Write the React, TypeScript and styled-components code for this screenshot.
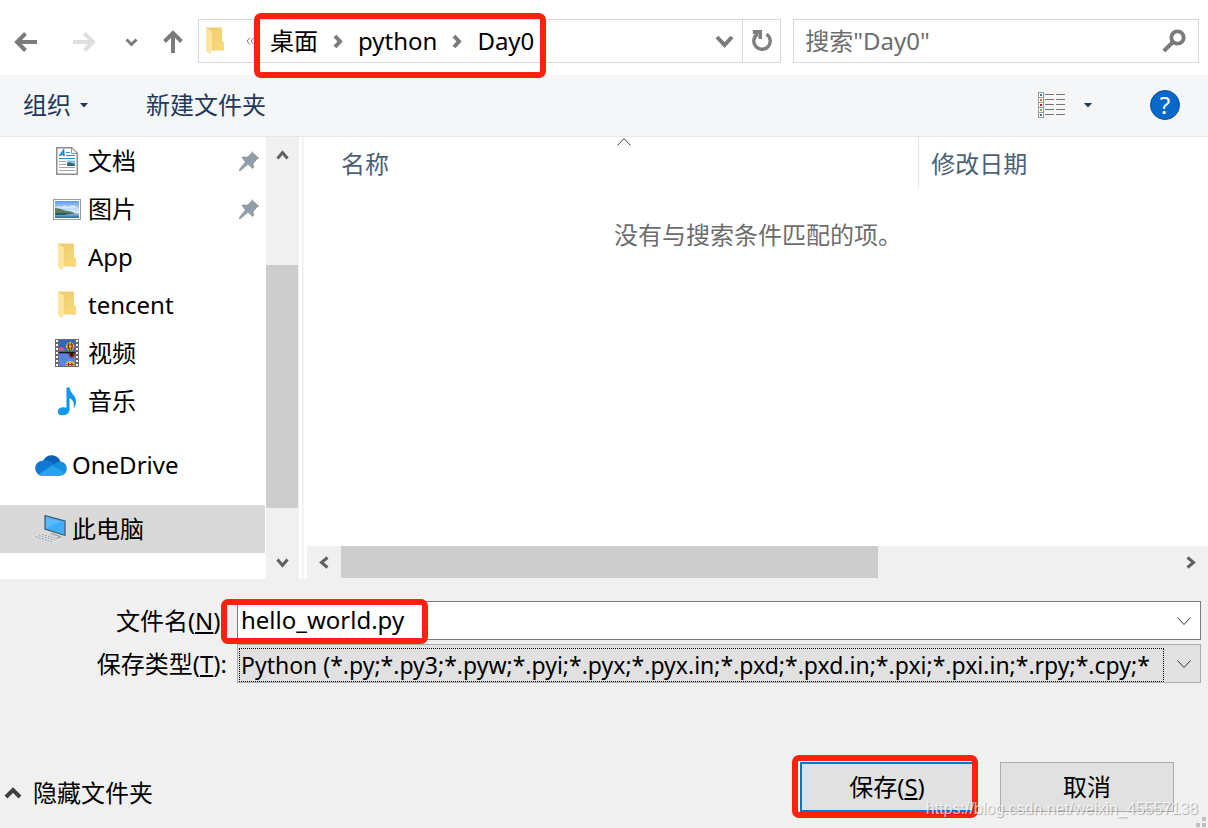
import React from "react";
import styled, { createGlobalStyle } from "styled-components";

const Global = createGlobalStyle`
  *, *::before, *::after { box-sizing: border-box; }
  body {
    margin: 0;
    background: #f0f0f0;
    color: #000;
    font: 24px/32px "Noto Sans", "Noto Sans CJK SC", sans-serif;
  }
  button, input, select { font: inherit; color: inherit; margin: 0; padding: 0; }
  svg { display: block; flex: none; }
`;

const Dialog = styled.div`
  display: flex;
  flex-direction: column;
  min-height: 100vh;
  overflow: hidden;
`;

const PlainButton = styled.button`
  display: flex;
  align-items: center;
  justify-content: center;
  border: 0;
  background: none;
  white-space: nowrap;
`;

/* Red frame drawn over the part of the dialog that it points out. */
const Marker = styled.span<{ $inset: string; $width?: number }>`
  position: absolute;
  inset: ${(p) => p.$inset};
  width: ${(p) => (p.$width ? `${p.$width}px` : "auto")};
  border: 6px solid #ff2010;
  border-radius: 7px;
  pointer-events: none;
  z-index: 2;
`;

/* ---------- navigation bar ---------- */

const NavBar = styled.nav`
  position: relative;
  z-index: 1;
  display: flex;
  align-items: center;
  height: 75px;
  padding: 7px 9px 0 14px;
  background: #fff;
`;

const NavButtons = styled.div`
  display: flex;
  align-items: center;
  flex: none;
  width: 184px;
  height: 44px;
  padding-top: 2px;
`;

const NavButton = styled(PlainButton)<{ $gap: number }>`
  margin-right: ${(p) => p.$gap}px;
`;

const AddressBox = styled.div`
  display: flex;
  flex: 29 1 0;
  min-width: 0;
  height: 44px;
  border: 1px solid #d9d9d9;
`;

const AddressIcon = styled.span`
  display: flex;
  align-items: center;
  justify-content: space-between;
  flex: none;
  width: 56px;
  padding-left: 6px;
`;

const Crumbs = styled.div`
  position: relative;
  display: flex;
  align-items: center;
  padding-left: 15px;
  padding-right: 12px;
`;

const Crumb = styled(PlainButton)`
  height: 32px;
`;

const CrumbArrow = styled.span`
  display: flex;
  justify-content: center;
  width: 40px;
`;

const AddressDrop = styled(PlainButton)`
  margin-left: auto;
  width: 36px;
`;

const RefreshButton = styled(PlainButton)`
  width: 38px;
  border-left: 1px solid #d9d9d9;
`;

const SearchBox = styled.label`
  display: flex;
  align-items: center;
  flex: 19 1 0;
  min-width: 0;
  height: 44px;
  margin-left: 12px;
  padding: 0 12px 0 11px;
  border: 1px solid #d9d9d9;
`;

const SearchInput = styled.input`
  flex: 1;
  min-width: 0;
  height: 32px;
  border: 0;
  outline: 0;
  background: none;
  &::placeholder { color: #6d6d6d; opacity: 1; }
`;

/* ---------- toolbar ---------- */

const Toolbar = styled.div`
  display: flex;
  align-items: center;
  height: 62px;
  padding: 0 28px 1px 23px;
  background: #f5f6f8;
  border-bottom: 1px solid #e6e7ea;
  color: #1e395b;
`;

const ToolButton = styled(PlainButton)<{ $gap?: number }>`
  gap: 9px;
  margin-right: ${(p) => p.$gap ?? 0}px;
`;

const ViewButton = styled(PlainButton)`
  gap: 18px;
  margin-left: auto;
  margin-right: 58px;
`;

const HelpButton = styled(PlainButton)`
  width: 30px;
  height: 30px;
  border: 1px solid #0a4f94;
  border-radius: 50%;
  background: #0569cb;
  color: #fff;
`;

/* ---------- body ---------- */

const Body = styled.div`
  display: flex;
  flex: 1;
  min-height: 442px;
  background: #fff;
`;

const Tree = styled.ul`
  width: 265px;
  flex: none;
  margin: 0;
  padding: 0;
  list-style: none;
`;

const TreeRow = styled.li<{ $root?: boolean; $selected?: boolean }>`
  display: flex;
  align-items: center;
  height: 48px;
  margin-top: ${(p) => (p.$root ? 16 : 0)}px;
  padding: 0 5px 0 ${(p) => (p.$root ? 34 : 50)}px;
  background: ${(p) => (p.$selected ? "#d9d9d9" : "none")};
`;

const TreeIcon = styled.span`
  display: flex;
  justify-content: center;
  width: 33px;
  margin-right: 5px;
`;

const TreeLink = styled.a`
  flex: 1;
  color: inherit;
  text-decoration: none;
`;

const VScroll = styled.div`
  display: flex;
  flex-direction: column;
  flex: none;
  width: 33px;
  margin-left: 1px;
  background: #f0f0f0;
`;

const VArrow = styled(PlainButton)`
  height: 34px;
  padding-top: 2px;
`;

const Divider = styled.div`
  flex: none;
  width: 2px;
  margin: 0 0 0 3px;
  background: #f3f3f3;
`;

const ScrollPart = styled.div<{ $grow: number; $thumb?: boolean }>`
  flex: ${(p) => p.$grow} 1 0;
  background: ${(p) => (p.$thumb ? "#cdcdcd" : "none")};
`;

const VTrack = styled.div`
  display: flex;
  flex-direction: column;
  flex: 1;
  padding-right: 1px;
`;

const Files = styled.main`
  display: flex;
  flex-direction: column;
  flex: 1;
  min-width: 0;
`;

const FileTable = styled.table`
  width: 100%;
  table-layout: fixed;
  border-collapse: collapse;
  color: #6d6d6d;
`;

const HeadCell = styled.th<{ $name?: boolean }>`
  position: relative;
  height: 51px;
  width: ${(p) => (p.$name ? "68%" : "auto")};
  padding: 2px 0 0 ${(p) => (p.$name ? 37 : 12)}px;
  border-right: ${(p) => (p.$name ? "1px solid #e5e5e5" : "0")};
  color: #4c607a;
  font-weight: 400;
  text-align: left;
`;

const SortMark = styled.span`
  position: absolute;
  top: 0;
  left: 0;
  right: 0;
  display: flex;
  justify-content: center;
  padding-left: 25px;
`;

const EmptyCell = styled.td`
  padding: 31px 0 0 4px;
  text-align: center;
`;

const HScroll = styled.div`
  display: flex;
  height: 33px;
  margin-top: auto;
  margin-left: 3px;
  padding-bottom: 1px;
  background: #f0f0f0;
`;

const HArrow = styled(PlainButton)`
  width: 34px;
`;

/* ---------- footer ---------- */

const Footer = styled.form`
  position: relative;
  padding: 22px 7px 0 0;
  background: #f0f0f0;
`;

const Fields = styled.div`
  display: grid;
  grid-template-columns: 227px minmax(0, 1fr);
  grid-auto-rows: 39px;
  gap: 4px 10px;
  align-items: center;
`;

const FieldLabel = styled.label`
  text-align: right;
  white-space: nowrap;
`;

const Field = styled.div<{ $filled?: boolean }>`
  position: relative;
  display: flex;
  height: 39px;
  padding: ${(p) => (p.$filled ? 3 : 2)}px 0 1px 1px;
  border: 1px solid ${(p) => (p.$filled ? "#adadad" : "#7a7a7a")};
  background: ${(p) => (p.$filled ? "#e1e1e1" : "#fff")};
`;

const NameInput = styled.input`
  flex: 1;
  min-width: 0;
  height: 32px;
  padding: 0 2px;
  border: 0;
  outline: 0;
  background: none;
`;

const TypeSelect = styled.select`
  flex: 1;
  min-width: 0;
  height: 34px;
  padding: 0 0 1px 1px;
  border: 1px dotted #000;
  border-radius: 0;
  outline: 0;
  background: none;
  appearance: none;
  font-size: 23px;
  text-overflow: clip;
`;

const FieldDrop = styled.span`
  display: flex;
  align-items: center;
  justify-content: center;
  flex: none;
  width: 36px;
  padding-left: 4px;
  pointer-events: none;
`;

const Actions = styled.div`
  display: flex;
  align-items: center;
  margin-top: 79px;
  padding: 0 27px 16px 4px;
`;

const HideButton = styled(PlainButton)`
  gap: 11px;
  margin-right: auto;
  padding-top: 11px;
`;

const ActionSlot = styled.div`
  position: relative;
  margin-left: 26px;
`;

const ActionButton = styled(PlainButton)<{ $primary?: boolean }>`
  width: 174px;
  height: 50px;
  background: #e1e1e1;
  border: ${(p) => (p.$primary ? "2px solid #0078d7" : "1px solid #adadad")};
`;

const Watermark = styled.span`
  position: absolute;
  right: 10px;
  bottom: 9px;
  z-index: 3;
  font: 16px/20px "Liberation Sans", sans-serif;
  color: rgba(255, 255, 255, 0.75);
  text-shadow: 1px 1px 1px rgba(0, 0, 0, 0.28);
  pointer-events: none;
`;

const Grip = styled.svg`
  position: absolute;
  right: 2px;
  bottom: 1px;
`;

/* ---------- icons ---------- */

type ChevronProps = { dir: "up" | "down" | "left" | "right"; w: number; h: number; stroke: number; color: string };

const Chevron = ({ dir, w, h, stroke, color }: ChevronProps) => {
  const s = stroke / 2;
  const pts = {
    up: `${s},${h - s} ${w / 2},${s + 1} ${w - s},${h - s}`,
    down: `${s},${s} ${w / 2},${h - s - 1} ${w - s},${s}`,
    left: `${w - s},${s} ${s + 1},${h / 2} ${w - s},${h - s}`,
    right: `${s},${s} ${w - s - 1},${h / 2} ${s},${h - s}`,
  }[dir];
  return (
    <svg width={w} height={h} aria-hidden="true">
      <polyline points={pts} fill="none" stroke={color} strokeWidth={stroke} />
    </svg>
  );
};

const Arrow = ({ kind }: { kind: "back" | "forward" | "up" }) => {
  const turn = { back: 0, forward: 180, up: 90 }[kind];
  return (
    <svg width="24" height="24" viewBox="0 0 24 24" aria-hidden="true">
      <g transform={`rotate(${turn} 12 12)`} fill="none" stroke={kind === "forward" ? "#dfdfdf" : "#7b7b7b"} strokeWidth="4">
        <path d="M2.5 12H23M11.5 3.5L3 12l8.500 8.500" />
      </g>
    </svg>
  );
};

const Caret = () => (
  <svg width="8" height="5" aria-hidden="true">
    <path d="M0 0h8L4 4.500z" fill="#1e395b" />
  </svg>
);

const Folder = () => (
  <svg width="20" height="28" viewBox="0 0 20 28" aria-hidden="true">
    <defs>
      <linearGradient id="fold" x1="0" y1="0" x2="1" y2="1">
        <stop offset="0" stopColor="#eccb6c" />
        <stop offset="1" stopColor="#fbdb7f" />
      </linearGradient>
    </defs>
    <path d="M12 24l8-.8-2-1.500z" fill="#e4e4e4" />
    <path d="M1 .5h16v13l2 2v8H3z" fill="url(#fold)" />
    <path d="M1 .5l6 4v19H6v4L1 24z" fill="#ffe69c" />
  </svg>
);

const Refresh = () => (
  <svg width="20" height="22" viewBox="0 0 20 22" aria-hidden="true">
    <path d="M14.500 4.200A8.200 8.200 0 1 1 5.800 4" fill="none" stroke="#7f7f7f" strokeWidth="3.400" />
    <path d="M.8 0H10v9H6.500V4H.8z" fill="#7f7f7f" />
  </svg>
);

const Magnifier = () => (
  <svg width="24" height="24" viewBox="0 0 24 24" aria-hidden="true">
    <circle cx="15.500" cy="8.500" r="6.200" fill="none" stroke="#7a7a7a" strokeWidth="3.800" />
    <path d="M11 13L1.800 22" stroke="#7a7a7a" strokeWidth="4" />
  </svg>
);

const DetailsView = () => (
  <svg width="28" height="27" viewBox="0 0 28 27" aria-hidden="true">
    {["#2f7f96", "#a8743c", "#c01818", "#7fb04a", "#2f7f96"].map((c, i) => (
      <g key={i}>
        <rect x="0.500" y={0.5 + i * 5} width="5" height="5" fill="#fff" stroke="#9a9a9a" />
        <rect x="2" y={2 + i * 5} width="2" height="2" fill={c} />
        <path d={`M7 ${2.5 + i * 5}h9M18 ${2.5 + i * 5}h9`} stroke="#777" />
      </g>
    ))}
  </svg>
);

const Pin = () => (
  <svg width="21" height="20" viewBox="0 0 21 20" aria-hidden="true">
    <path d="M12.500 0L20.500 7.500l-2 .5-4 4.500.5 4-1.500 1.500-4.500-4.500L1.500 20 0 19.800v-1.300L6 11 2.500 6.500 4 5.500l4.500.3 4-4z" fill="#929ea6" />
  </svg>
);

const DocIcon = () => (
  <svg width="22" height="28" viewBox="0 0 22 28" aria-hidden="true">
    <path d="M.75.75h15l5.500 5.500v21H.75z" fill="#fff" stroke="#8d8d8d" strokeWidth="1.500" />
    <path d="M15.500 1v5.500H21" fill="#eee" stroke="#9b9b9b" />
    <path d="M3.500 9L7.500 3.500 8 9M5 7.500h3" fill="none" stroke="#1c86c9" strokeWidth="1.600" />
    <path d="M10 5.500h4M10 8.500h9M3 11.500h16" stroke="#2f8fcd" strokeWidth="1.200" />
    <path d="M3 14.500h7M3 17.500h7M3 20.500h16M3 23.500h16" stroke="#a5a5a5" strokeWidth="1.200" />
    <rect x="11" y="13.500" width="8" height="5.500" fill="#8cc0ec" />
    <path d="M11 16l3-.8 5 2v1.800h-8z" fill="#326b7c" />
  </svg>
);

const PictureIcon = () => (
  <svg width="28" height="21" viewBox="0 0 28 21" aria-hidden="true">
    <defs>
      <linearGradient id="sky" x1="0" y1="0" x2="0" y2="1">
        <stop offset="0" stopColor="#5d9ced" />
        <stop offset="1" stopColor="#e5f2fc" />
      </linearGradient>
      <linearGradient id="lake" x1="0" y1="0" x2="0" y2="1">
        <stop offset="0" stopColor="#a5cde3" />
        <stop offset="1" stopColor="#23659e" />
      </linearGradient>
    </defs>
    <rect x=".5" y=".5" width="27" height="20" fill="#fff" stroke="#9b9b9b" />
    <rect x="2" y="2" width="24" height="12" fill="url(#sky)" />
    <path d="M3 8q3-2 5 0 4-3 7 0 3-3 9-.5v2H4z" fill="#d5e8fb" />
    <rect x="2" y="14" width="24" height="5" fill="url(#lake)" />
    <path d="M2 9q5 0 10 2.500 6 .5 11 3l-9 .5H2z" fill="#54805f" />
    <path d="M2 14h19l-9 2H2z" fill="#2f5c60" />
  </svg>
);

const VideoIcon = () => (
  <svg width="24" height="28" viewBox="0 0 24 28" aria-hidden="true">
    <rect width="24" height="28" fill="#6b6b6b" />
    {[1, 5, 9, 13, 17, 21, 25].map((y) => (
      <path key={y} d={`M1 ${y}h2v2H1zM21 ${y}h2v2h-2z`} fill="#fff" />
    ))}
    <rect x="4" y="1" width="16" height="26" fill="#3465c0" />
    <path d="M4 15h16v12H4z" fill="#5a86de" />
    <path d="M4 9.500q3-3 5 .5l3 1.500h8V13H4z" fill="#df5590" />
    <path d="M4 12l8-1 8 1v1.500H4z" fill="#1d7f83" />
    <path d="M3.500 13.500h17" stroke="#161616" />
    <path d="M11 7.500a4.200 4.200 0 0 1 8.400 0q0 2-3 4.500h-2.200q-3.200-2.500-3.200-4.500z" fill="#f0c72a" />
    <path d="M12 6h6.500M12 9h6" stroke="#a23a1a" />
    <path d="M14 4q-2 4 .8 8M16.500 4q2 4-.8 8" fill="none" stroke="#4d2d12" />
    <path d="M13 14h7v2q-1 2-2.500 3h-1.500q-2.500-2-3-5z" fill="#9d2a25" />
    <path d="M15 14h3v3h-3z" fill="#261a1a" />
    <path d="M11 27q-1-5 4.200-5t4.300 5z" fill="#f0c72a" />
    <path d="M13.500 27v-3.500M16.800 27v-3.500" stroke="#4d2d12" />
    <path d="M11.500 25.500h7.500" stroke="#a23a1a" />
  </svg>
);

const MusicIcon = () => (
  <svg width="20" height="29" viewBox="0 0 20 29" aria-hidden="true">
    <path d="M9.500.5h3q.5 4 3.500 7 3.500 3.500 3 8-.3 3.500-2.500 6 1-5.500-1-8-1.500-2-3-2.500v12q-.5 5-6.500 5.300Q.8 28.300.8 24.800.8 20.500 6.500 20.300q2 0 3 .5z" fill="#0b98f0" />
  </svg>
);

const CloudIcon = () => (
  <svg width="32" height="21" viewBox="0 0 32 21" aria-hidden="true">
    <path d="M8 6Q11 0 17 .3q6 .3 8.500 6.200L19 12z" fill="#0a62b8" />
    <path d="M8 5.500q5-1 10 3l5 3L5 20.500Q0 18 .2 12.500.8 6.500 8 5.500z" fill="#0f78d4" />
    <path d="M18 10q4-4 8-3.500 6 1.500 5.800 7.500-.3 4-3.800 6L15 12z" fill="#1590df" />
    <path d="M3.500 19.500L17 10.500l13 7.500q-2 3-6 3H7q-2 0-3.500-1.500z" fill="#28a4ea" />
  </svg>
);

const ComputerIcon = () => (
  <svg width="32" height="28" viewBox="0 0 32 28" aria-hidden="true">
    <path d="M10 .7L30 6v14.500L10 14z" fill="#3fadf8" stroke="#43596b" strokeWidth="1.200" />
    <path d="M11 2l15 4.500L11 13z" fill="#62bdfb" opacity=".8" />
    <path d="M16 18.500l10 3.200-4 1.300" fill="none" stroke="#8c98a0" />
    <path d="M0 21.500l7-2.500 18 5-7 3.500z" fill="#e4e7e9" />
    <path d="M1 21.500l17 5.500M4 20.500l17 5M7 19.500l16 4.500" stroke="#8b959c" strokeWidth=".9" strokeDasharray="2 1" />
  </svg>
);

const tree = [
  { text: "文档", icon: <DocIcon />, pinned: true },
  { text: "图片", icon: <PictureIcon />, pinned: true },
  { text: "App", icon: <Folder /> },
  { text: "tencent", icon: <Folder /> },
  { text: "视频", icon: <VideoIcon /> },
  { text: "音乐", icon: <MusicIcon /> },
  { text: "OneDrive", icon: <CloudIcon />, root: true },
  { text: "此电脑", icon: <ComputerIcon />, root: true, selected: true },
];

const scrollInk = "#606060";

export default function App() {
  return (
    <Dialog>
      <Global />
      <NavBar aria-label="导航">
        <NavButtons>
          <NavButton type="button" aria-label="后退" $gap={34}><Arrow kind="back" /></NavButton>
          <NavButton type="button" aria-label="前进" $gap={29}><Arrow kind="forward" /></NavButton>
          <NavButton type="button" aria-label="最近" $gap={23}>
            <Chevron dir="down" w={13} h={9} stroke={3} color="#7b7b7b" />
          </NavButton>
          <NavButton type="button" aria-label="向上" $gap={0}><Arrow kind="up" /></NavButton>
        </NavButtons>
        <AddressBox>
          <AddressIcon>
            <Folder />
            <svg width="9" height="8" aria-hidden="true">
              <path d="M4 .5L1 4l3 3.500M8 .5L5 4l3 3.500" fill="none" stroke="#7b7b7b" />
            </svg>
          </AddressIcon>
          <Crumbs>
            <Crumb type="button">桌面</Crumb>
            <CrumbArrow><Chevron dir="right" w={10} h={15} stroke={4} color="#7b7b7b" /></CrumbArrow>
            <Crumb type="button">python</Crumb>
            <CrumbArrow><Chevron dir="right" w={10} h={15} stroke={4} color="#7b7b7b" /></CrumbArrow>
            <Crumb type="button">Day0</Crumb>
            <Marker $inset="-7px 0 -16px -1px" />
          </Crumbs>
          <AddressDrop type="button" aria-label="以前的位置">
            <Chevron dir="down" w={19} h={13} stroke={4} color="#7b7b7b" />
          </AddressDrop>
          <RefreshButton type="button" aria-label="刷新"><Refresh /></RefreshButton>
        </AddressBox>
        <SearchBox>
          <SearchInput type="search" aria-label="搜索" placeholder={'搜索"Day0"'} />
          <Magnifier />
        </SearchBox>
      </NavBar>

      <Toolbar>
        <ToolButton type="button" $gap={58}>组织<Caret /></ToolButton>
        <ToolButton type="button">新建文件夹</ToolButton>
        <ViewButton type="button" aria-label="更改视图"><DetailsView /><Caret /></ViewButton>
        <HelpButton type="button">?</HelpButton>
      </Toolbar>

      <Body>
        <Tree>
          {tree.map((n) => (
            <TreeRow key={n.text} $root={n.root} $selected={n.selected}>
              <TreeIcon>{n.icon}</TreeIcon>
              <TreeLink href="#">{n.text}</TreeLink>
              {n.pinned && <Pin />}
            </TreeRow>
          ))}
        </Tree>
        <VScroll>
          <VArrow type="button" aria-label="向上滚动"><Chevron dir="up" w={13} h={10} stroke={3} color={scrollInk} /></VArrow>
          <VTrack>
            <ScrollPart $grow={94} />
            <ScrollPart $grow={243} $thumb />
            <ScrollPart $grow={37} />
          </VTrack>
          <VArrow type="button" aria-label="向下滚动"><Chevron dir="down" w={13} h={10} stroke={3} color={scrollInk} /></VArrow>
        </VScroll>
        <Divider />
        <Files>
          <FileTable>
            <thead>
              <tr>
                <HeadCell scope="col" $name>
                  <SortMark><Chevron dir="up" w={14} h={9} stroke={1} color="#444" /></SortMark>
                  名称
                </HeadCell>
                <HeadCell scope="col">修改日期</HeadCell>
              </tr>
            </thead>
            <tbody>
              <tr><EmptyCell colSpan={2}>没有与搜索条件匹配的项。</EmptyCell></tr>
            </tbody>
          </FileTable>
          <HScroll>
            <HArrow type="button" aria-label="向左滚动"><Chevron dir="left" w={10} h={13} stroke={3} color={scrollInk} /></HArrow>
            <ScrollPart $grow={538} $thumb />
            <ScrollPart $grow={297} />
            <HArrow type="button" aria-label="向右滚动"><Chevron dir="right" w={10} h={13} stroke={3} color={scrollInk} /></HArrow>
          </HScroll>
        </Files>
      </Body>

      <Footer onSubmit={(e) => e.preventDefault()}>
        <Fields>
          <FieldLabel htmlFor="file-name">文件名(<u>N</u>):</FieldLabel>
          <Field>
            <NameInput id="file-name" type="text" defaultValue="hello_world.py" />
            <FieldDrop><Chevron dir="down" w={14} h={9} stroke={1} color="#333" /></FieldDrop>
            <Marker $inset="-3px auto -5px -17px" $width={207} />
          </Field>
          <FieldLabel htmlFor="file-type">保存类型(<u>T</u>):</FieldLabel>
          <Field $filled>
            <TypeSelect id="file-type">
              <option>Python (*.py;*.py3;*.pyw;*.pyi;*.pyx;*.pyx.in;*.pxd;*.pxd.in;*.pxi;*.pxi.in;*.rpy;*.cpy;*</option>
            </TypeSelect>
            <FieldDrop><Chevron dir="down" w={14} h={9} stroke={1} color="#333" /></FieldDrop>
          </Field>
        </Fields>
        <Actions>
          <HideButton type="button">
            <Chevron dir="up" w={18} h={12} stroke={4} color="#404040" />
            隐藏文件夹
          </HideButton>
          <ActionSlot>
            <ActionButton type="submit" $primary><span>保存(<u>S</u>)</span></ActionButton>
            <Marker $inset="-7px -4px -6px -8px" />
          </ActionSlot>
          <ActionSlot>
            <ActionButton type="button">取消</ActionButton>
          </ActionSlot>
        </Actions>
        <Watermark>https://blog.csdn.net/weixin_45557138</Watermark>
        <Grip width="10" height="10" aria-hidden="true">
          <path d="M6 0h4v4H6zM0 6h4v4H0zM6 6h4v4H6z" fill="#bfbfbf" />
        </Grip>
      </Footer>
    </Dialog>
  );
}
